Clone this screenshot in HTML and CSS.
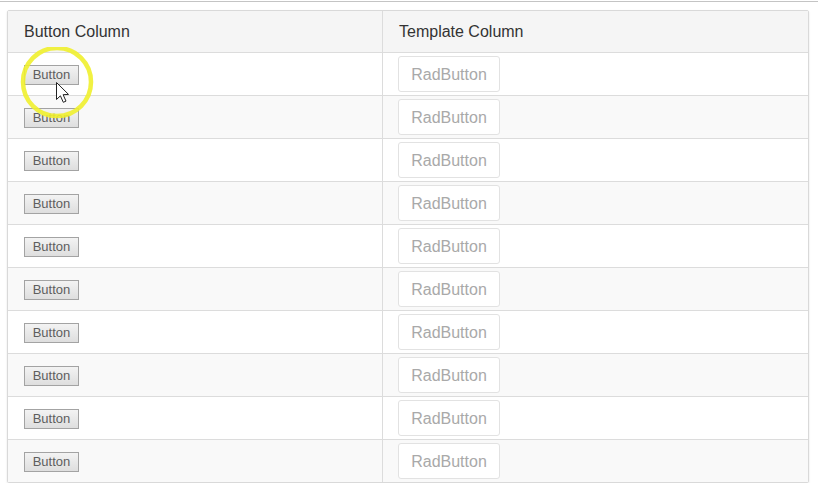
FILE: index.html
```html
<!DOCTYPE html>
<html>
<head>
<meta charset="utf-8">
<link rel="stylesheet" href="styles.css">
</head>
<body>
<div class="topline"></div>
<div class="wrap">
  <table class="grid">
    <thead>
      <tr><th class="c1">Button Column</th><th>Template Column</th></tr>
    </thead>
    <tbody>
      <tr><td class="c1"><span class="btn">Button</span></td><td><span class="rad">RadButton</span></td></tr>
      <tr class="alt"><td class="c1"><span class="btn">Button</span></td><td><span class="rad">RadButton</span></td></tr>
      <tr><td class="c1"><span class="btn">Button</span></td><td><span class="rad">RadButton</span></td></tr>
      <tr class="alt"><td class="c1"><span class="btn">Button</span></td><td><span class="rad">RadButton</span></td></tr>
      <tr><td class="c1"><span class="btn">Button</span></td><td><span class="rad">RadButton</span></td></tr>
      <tr class="alt"><td class="c1"><span class="btn">Button</span></td><td><span class="rad">RadButton</span></td></tr>
      <tr><td class="c1"><span class="btn">Button</span></td><td><span class="rad">RadButton</span></td></tr>
      <tr class="alt"><td class="c1"><span class="btn">Button</span></td><td><span class="rad">RadButton</span></td></tr>
      <tr><td class="c1"><span class="btn">Button</span></td><td><span class="rad">RadButton</span></td></tr>
      <tr class="alt last"><td class="c1"><span class="btn">Button</span></td><td><span class="rad">RadButton</span></td></tr>
    </tbody>
  </table>
</div>
<svg class="cursor" width="80" height="80" viewBox="0 0 80 80">
  <circle cx="37" cy="35" r="34" fill="none" stroke="#f0f02e" stroke-width="4.5" opacity="0.9"/>
  <path d="M36.5 35.5 L36.5 52.5 L40.4 48.8 L43.3 55.3 L46 54.1 L43.1 47.7 L48.5 47.4 Z" fill="#fff" stroke="#222" stroke-width="1" stroke-linejoin="miter"/>
</svg>
</body>
</html>
```

FILE: styles.css
```css
html, body {
  margin: 0;
  padding: 0;
  background: #fff;
  font-family: "Liberation Sans", Arial, sans-serif;
}
.topline {
  height: 1px;
  margin-top: 1px;
  background: #c4c4c4;
}
.wrap {
  padding: 8px 9px 0 7px;
}
.grid {
  width: 802px;
  border-collapse: separate;
  border-spacing: 0;
  border: 1px solid #d9d9d9;
  border-radius: 2px;
  box-shadow: 0 1px 2px rgba(0,0,0,0.12);
  font-family: "Liberation Sans", Arial, sans-serif;
}
.grid th {
  height: 41px;
  padding: 0 0 0 16px;
  text-align: left;
  font-weight: normal;
  font-size: 16px;
  color: #333;
  background: #f5f5f5;
  border-bottom: 1px solid #dcdcdc;
}
.grid td {
  height: 42px;
  padding: 0 0 0 15px;
  border-bottom: 1px solid #dcdcdc;
  background: #fff;
}
.grid tr.alt td {
  background: #f9f9f9;
}
.grid tr.last td {
  border-bottom: none;
}
.grid .c1 {
  width: 358px;
  border-right: 1px solid #dcdcdc;
}
.grid th.c1 {
  padding-left: 16px;
}
.btn {
  display: inline-block;
  box-sizing: border-box;
  width: 55px;
  height: 20px;
  line-height: 18px;
  margin-top: 1px;
  margin-left: 1px;
  text-align: center;
  font-size: 13px;
  color: #5e5e5e;
  border: 1px solid #a3a3a3;
  background: linear-gradient(#f3f3f3, #dedede);
}
.rad {
  display: inline-block;
  box-sizing: border-box;
  width: 102px;
  height: 36px;
  line-height: 32px;
  padding-top: 2px;
  text-align: center;
  font-size: 16px;
  color: #a9a9a9;
  border: 1px solid #e2e2e2;
  border-radius: 3px;
  background: #fff;
}
.cursor {
  position: absolute;
  left: 20px;
  top: 47px;
}
```
